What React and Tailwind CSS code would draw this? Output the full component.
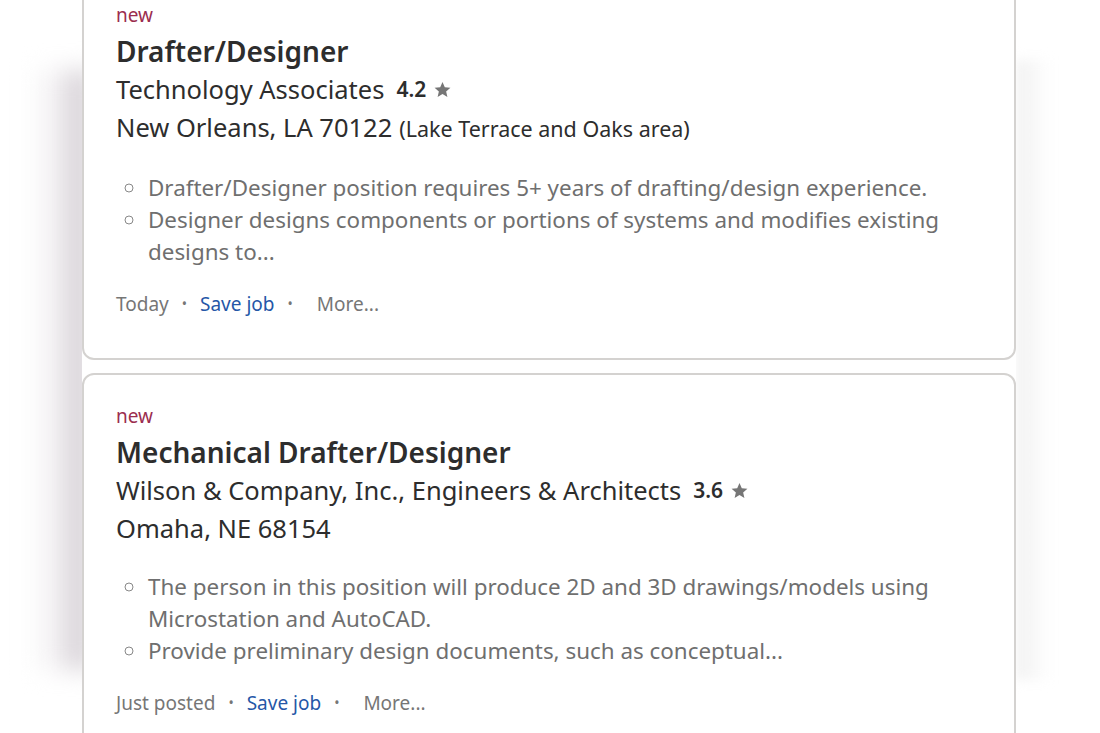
import React from "react";

const jobs = [
  {
    title: "Drafter/Designer",
    company: "Technology Associates",
    rating: "4.2",
    location: "New Orleans, LA 70122",
    area: "(Lake Terrace and Oaks area)",
    bullets: [
      "Drafter/Designer position requires 5+ years of drafting/design experience.",
      "Designer designs components or portions of systems and modifies existing designs to...",
    ],
    posted: "Today",
  },
  {
    title: "Mechanical Drafter/Designer",
    company: "Wilson & Company, Inc., Engineers & Architects",
    rating: "3.6",
    location: "Omaha, NE 68154",
    area: null,
    bullets: [
      "The person in this position will produce 2D and 3D drawings/models using Microstation and AutoCAD.",
      "Provide preliminary design documents, such as conceptual...",
    ],
    posted: "Just posted",
  },
];

const Star = () => (
  <svg viewBox="0 0 24 24" className="w-[19px] h-[19px] ml-[7px] fill-[#767676]">
    <path d="M12 2.5l2.9 6.6 7.1.6-5.4 4.7 1.6 7-6.2-3.8-6.2 3.8 1.6-7L2 9.7l7.1-.6z" />
  </svg>
);

const JobCard = ({ job }) => (
  <div className="border-2 border-[#d4d2d0] rounded-[12px] bg-white px-[32px] pt-[27px] pb-[40px]">
    <div className="text-[19px] leading-[28px] text-[#9b2d4f]">new</div>
    <h2 className="text-[28px] leading-[38px] font-semibold text-[#2d2d2d] mt-[3px]">
      {job.title}
    </h2>
    <div className="flex items-center text-[25.5px] leading-[38px] text-[#2d2d2d]">
      <span>{job.company}</span>
      <span className="ml-[12px] text-[21px] font-semibold">{job.rating}</span>
      <Star />
    </div>
    <div className="text-[25.5px] leading-[38px] text-[#2d2d2d]">
      {job.location}
      {job.area && <span className="text-[21.5px] ml-[7px]">{job.area}</span>}
    </div>
    <ul className="list-[circle] pl-[32px] mt-[24px] text-[22.4px] leading-[32px] text-[#6f6f6f] marker:text-[#888]">
      {job.bullets.map((b, i) => (
        <li key={i}>{b}</li>
      ))}
    </ul>
    <div className="flex items-center mt-[22px] text-[19px] leading-[28px] text-[#767676]">
      <span>{job.posted}</span>
      <span className="mx-[13px] text-[14px]">•</span>
      <span className="text-[#2557a7]">Save job</span>
      <span className="ml-[13px] mr-[24px] text-[14px]">•</span>
      <span>More...</span>
    </div>
  </div>
);

export default function App() {
  return (
    <div
      className="flex w-[1100px] h-[733px] overflow-hidden bg-white"
      style={{ fontFamily: '"Noto Sans", "Open Sans", sans-serif' }}
    >
      <div className="w-[82px] shrink-0 overflow-hidden flex justify-end pt-[70px]">
        <div className="w-[58px] h-[600px] mr-[-6px] bg-gradient-to-r from-white via-[#eeebee] via-60% to-[#bdb5bd] blur-[12px]" />
      </div>
      <div className="w-[934px] shrink-0 flex flex-col gap-[13px] -mt-[28px]">
        {jobs.map((job, i) => (
          <JobCard key={i} job={job} />
        ))}
      </div>
      <div className="flex-1 overflow-hidden pt-[60px] pl-[4px]">
        <div className="w-[36px] h-[620px] ml-[-4px] bg-gradient-to-r from-[#f1f1f1] to-white blur-[6px]" />
      </div>
    </div>
  );
}
